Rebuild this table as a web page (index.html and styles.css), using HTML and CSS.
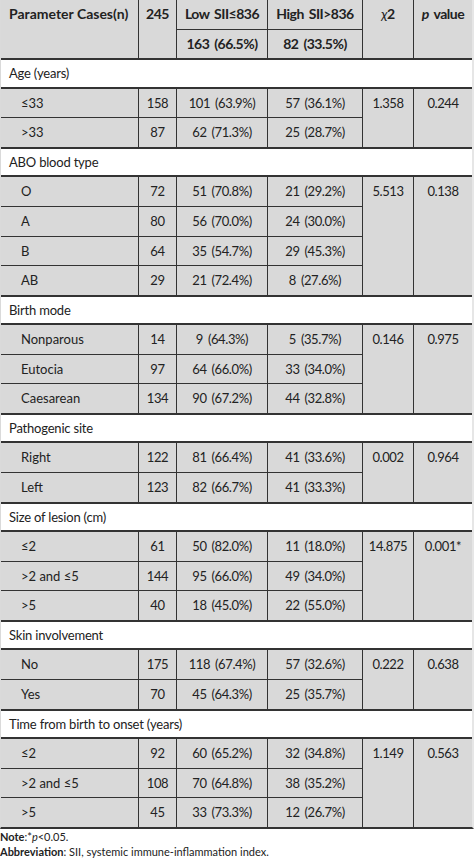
FILE: index.html
```html
<!DOCTYPE html>
<html>
<head>
<meta charset="utf-8">
<link rel="stylesheet" href="styles.css">
</head>
<body>
<div class="tbl">
  <div class="c hd left r2">Parameter Cases(n)</div>
  <div class="c hd r2">245</div>
  <div class="c hd">Low SII≤836</div>
  <div class="c hd">High SII&gt;836</div>
  <div class="c hd r2"><i class="chi">χ</i>2</div>
  <div class="c hd r2"><i>p</i> value</div>
  <div class="c hd">163 (66.5%)</div>
  <div class="c hd">82 (33.5%)</div>

  <div class="cat">Age (years)</div>
  <div class="c sub">≤33</div><div class="c">158</div><div class="c">101 (63.9%)</div><div class="c">57 (36.1%)</div><div class="c r2">1.358</div><div class="c r2">0.244</div>
  <div class="c sub">&gt;33</div><div class="c">87</div><div class="c">62 (71.3%)</div><div class="c">25 (28.7%)</div>

  <div class="cat">ABO blood type</div>
  <div class="c sub">O</div><div class="c">72</div><div class="c">51 (70.8%)</div><div class="c">21 (29.2%)</div><div class="c r4">5.513</div><div class="c r4">0.138</div>
  <div class="c sub">A</div><div class="c">80</div><div class="c">56 (70.0%)</div><div class="c">24 (30.0%)</div>
  <div class="c sub">B</div><div class="c">64</div><div class="c">35 (54.7%)</div><div class="c">29 (45.3%)</div>
  <div class="c sub">AB</div><div class="c">29</div><div class="c">21 (72.4%)</div><div class="c">8 (27.6%)</div>

  <div class="cat">Birth mode</div>
  <div class="c sub">Nonparous</div><div class="c">14</div><div class="c">9 (64.3%)</div><div class="c">5 (35.7%)</div><div class="c r3">0.146</div><div class="c r3">0.975</div>
  <div class="c sub">Eutocia</div><div class="c">97</div><div class="c">64 (66.0%)</div><div class="c">33 (34.0%)</div>
  <div class="c sub">Caesarean</div><div class="c">134</div><div class="c">90 (67.2%)</div><div class="c">44 (32.8%)</div>

  <div class="cat">Pathogenic site</div>
  <div class="c sub">Right</div><div class="c">122</div><div class="c">81 (66.4%)</div><div class="c">41 (33.6%)</div><div class="c r2">0.002</div><div class="c r2">0.964</div>
  <div class="c sub">Left</div><div class="c">123</div><div class="c">82 (66.7%)</div><div class="c">41 (33.3%)</div>

  <div class="cat">Size of lesion (cm)</div>
  <div class="c sub">≤2</div><div class="c">61</div><div class="c">50 (82.0%)</div><div class="c">11 (18.0%)</div><div class="c r3">14.875</div><div class="c r3">0.001*</div>
  <div class="c sub">&gt;2 and ≤5</div><div class="c">144</div><div class="c">95 (66.0%)</div><div class="c">49 (34.0%)</div>
  <div class="c sub">&gt;5</div><div class="c">40</div><div class="c">18 (45.0%)</div><div class="c">22 (55.0%)</div>

  <div class="cat">Skin involvement</div>
  <div class="c sub">No</div><div class="c">175</div><div class="c">118 (67.4%)</div><div class="c">57 (32.6%)</div><div class="c r2">0.222</div><div class="c r2">0.638</div>
  <div class="c sub">Yes</div><div class="c">70</div><div class="c">45 (64.3%)</div><div class="c">25 (35.7%)</div>

  <div class="cat">Time from birth to onset (years)</div>
  <div class="c sub">≤2</div><div class="c">92</div><div class="c">60 (65.2%)</div><div class="c">32 (34.8%)</div><div class="c r3">1.149</div><div class="c r3">0.563</div>
  <div class="c sub">&gt;2 and ≤5</div><div class="c">108</div><div class="c">70 (64.8%)</div><div class="c">38 (35.2%)</div>
  <div class="c sub">&gt;5</div><div class="c">45</div><div class="c">33 (73.3%)</div><div class="c">12 (26.7%)</div>
</div>
<div class="notes">
  <div><b>Note</b>:*<i>p</i>&lt;0.05.</div>
  <div><b>Abbreviation</b>: SII, systemic immune-inflammation index.</div>
</div>
</body>
</html>
```

FILE: styles.css
```css
html, body {
  margin: 0;
  padding: 0;
  background: #ffffff;
}
body {
  font-family: "Lato", "Liberation Sans", sans-serif;
  color: #222222;
  font-size: 13px;
}
.tbl {
  display: grid;
  grid-template-columns: 137px 37px 90px 94px 50px 58px;
  grid-auto-rows: 28.57px;
  gap: 1px;
  background: #333333;
  border-left: 1px solid #dadada;
  border-right: 2px solid #e6e6e6;
  border-bottom: 2px solid #333333;
}
.c {
  background: #d9d9d9;
  text-align: center;
  line-height: 28.57px;
  white-space: nowrap;
  letter-spacing: -0.4px;
  word-spacing: 2px;
}
.hd {
  font-weight: bold;
  font-size: 14px;
  letter-spacing: -0.5px;
}
.left {
  text-align: left;
  padding-left: 8px;
  letter-spacing: 0;
  word-spacing: 0;
}
.sub {
  text-align: left;
  padding-left: 20px;
  letter-spacing: 0;
  word-spacing: 0;
}
.cat {
  grid-column: 1 / -1;
  background: #ffffff;
  padding-left: 8px;
  line-height: 28.57px;
  white-space: nowrap;
  letter-spacing: -0.2px;
  box-shadow: inset 0 1px 0 #333333, inset 0 -1px 0 #333333;
}
.r2 { grid-row: span 2; }
.r3 { grid-row: span 3; }
.r4 { grid-row: span 4; }
.chi {
  font-weight: normal;
}
.notes {
  font-size: 11px;
  line-height: 15px;
}
```
